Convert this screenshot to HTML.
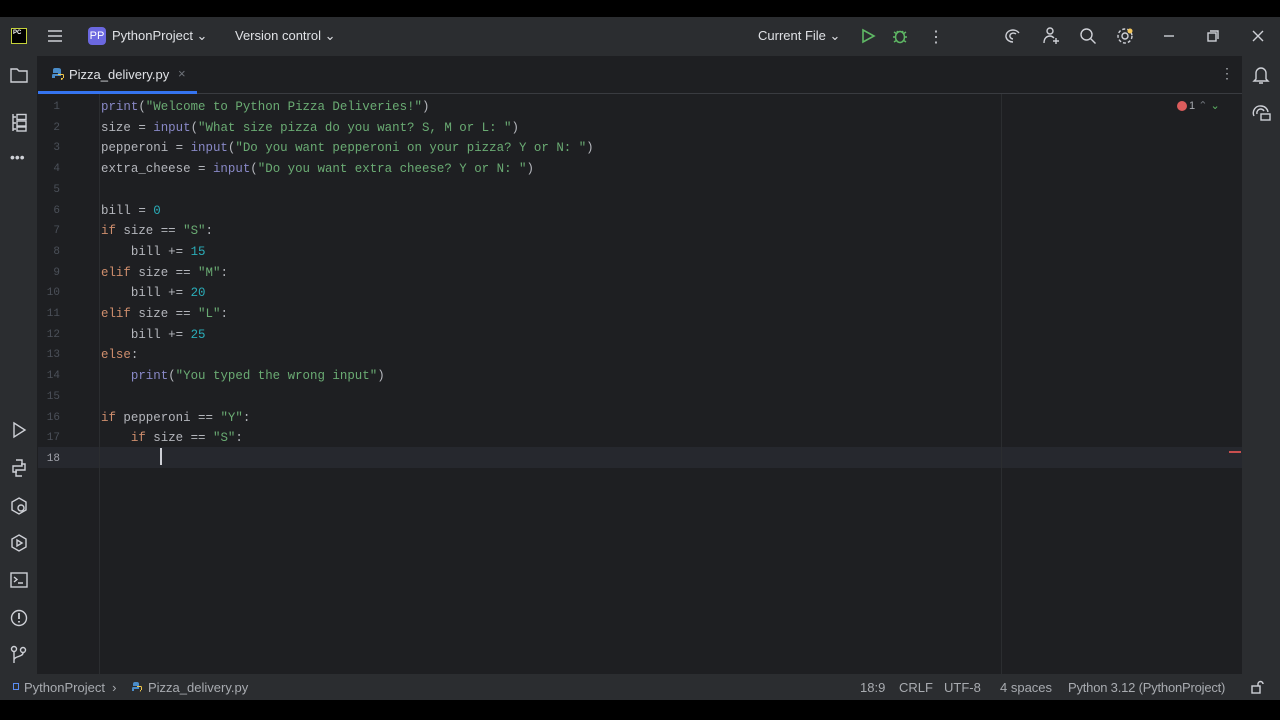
<!DOCTYPE html>
<html><head><meta charset="utf-8"><style>
*{margin:0;padding:0;box-sizing:border-box}
body{width:1280px;height:720px;background:#000;position:relative;overflow:hidden;font-family:"Liberation Sans",sans-serif;color:#dfe1e5}
.abs{position:absolute}
#title{left:0;top:17px;width:1280px;height:39px;background:#2b2d30}
#left{left:0;top:56px;width:38px;height:618px;background:#2b2d30;border-right:1px solid #1e1f22}
#right{left:1242px;top:56px;width:38px;height:618px;background:#2b2d30}
#tabs{left:38px;top:56px;width:1204px;height:38px;background:#1e1f22;border-bottom:1px solid #393b40}
#ed{left:38px;top:94px;width:1204px;height:580px;background:#1e1f22}
#status{left:0;top:674px;width:1280px;height:26px;background:#2b2d30;font-size:13px;color:#a8abb0}
.code{font-family:"Liberation Mono",monospace;font-size:12.45px;white-space:pre;color:#b4b6bc}
.ln{font-family:"Liberation Mono",monospace;font-size:11px;color:#4b5059;width:22px;text-align:right}
.k{color:#cf8e6d}.s{color:#6aab73}.b{color:#8888c6}.n{color:#2aacb8}
svg{position:absolute}
.ic{stroke:#ced0d6;fill:none;stroke-width:1.4}
</style></head><body>
<div id="title" class="abs"></div>
<div class="abs" style="left:11px;top:28px;width:16px;height:16px;background:#000;border:1.5px solid #c6d23a"></div>
<div class="abs" style="left:13px;top:30px;font-size:6px;color:#fff;font-weight:bold">PC</div>
<svg style="left:46px;top:28px" width="18" height="16"><path class="ic" d="M2 3h14M2 8h14M2 13h14"/></svg>
<div class="abs" style="left:88px;top:27px;width:18px;height:18px;border-radius:4px;background:#6b68e0;color:#fff;font-size:11px;text-align:center;line-height:18px">PP</div>
<div class="abs" style="left:112px;top:28px;font-size:13px;color:#dfe1e5">PythonProject ⌄</div>
<div class="abs" style="left:235px;top:28px;font-size:13px;color:#dfe1e5">Version control ⌄</div>
<div class="abs" style="left:758px;top:28px;font-size:13px;color:#dfe1e5">Current File ⌄</div>
<svg style="left:860px;top:28px" width="16" height="16"><path d="M3 2l11 6-11 6z" fill="none" stroke="#5fb865" stroke-width="1.6"/></svg>
<svg style="left:891px;top:27px" width="18" height="18"><ellipse cx="9" cy="10" rx="4.5" ry="5.5" fill="none" stroke="#5fb865" stroke-width="1.5"/><path d="M2 10h3M13 10h3M3 5l3 2M15 5l-3 2M3 15l3-2M15 15l-3-2M6 4l1 2M12 4l-1 2" stroke="#5fb865" stroke-width="1.4"/></svg>
<div class="abs" style="left:928px;top:27px;font-size:16px;color:#ced0d6">⋮</div>
<svg style="left:1004px;top:28px" width="18" height="16"><path class="ic" d="M9 14a7 6 0 1 1 6-9M9 11a3.5 3 0 1 1 3-5"/></svg>
<svg style="left:1042px;top:26px" width="18" height="20"><circle class="ic" cx="8" cy="5" r="3"/><path class="ic" d="M2 17c0-5 3-7 6-7 2 0 3 1 4 2M14 12v6M11 15h6"/></svg>
<svg style="left:1079px;top:27px" width="18" height="18"><circle class="ic" cx="7.5" cy="7.5" r="5.5"/><path class="ic" d="M11.5 11.5l5 5"/></svg>
<svg style="left:1116px;top:27px" width="18" height="18"><circle class="ic" cx="9" cy="9" r="3"/><circle class="ic" cx="9" cy="9" r="7" stroke-dasharray="3 2"/><circle cx="14" cy="4" r="2.5" fill="#f2c55c"/></svg>
<svg style="left:1163px;top:30px" width="12" height="12"><path class="ic" d="M1 6h10"/></svg>
<svg style="left:1207px;top:30px" width="12" height="12"><rect class="ic" x="1" y="3" width="8" height="8"/><path class="ic" d="M3 1h8v8"/></svg>
<svg style="left:1252px;top:30px" width="12" height="12"><path class="ic" d="M1 1l10 10M11 1L1 11"/></svg>

<div id="left" class="abs"></div>
<svg style="left:10px;top:67px" width="18" height="16"><path class="ic" d="M1 2h6l2 2h8v11H1z"/></svg>
<svg style="left:10px;top:113px" width="18" height="20"><path class="ic" d="M3 1v17M3 4h3M3 10h3M3 16h3"/><rect class="ic" x="7" y="1.5" width="9" height="5"/><rect class="ic" x="7" y="8" width="9" height="5"/><rect class="ic" x="7" y="14" width="9" height="4"/></svg>
<div class="abs" style="left:10px;top:149px;font-size:14px;color:#ced0d6">•••</div>
<svg style="left:10px;top:421px" width="18" height="18"><path class="ic" d="M4 2l11 7-11 7z"/></svg>
<svg style="left:9px;top:458px" width="20" height="20"><path class="ic" d="M7 2h6v6H4v6h4M13 18H7v-6h9V6h-4"/></svg>
<svg style="left:9px;top:496px" width="20" height="20"><path class="ic" d="M10 2l7 4v8l-7 4-7-4V6z"/><circle class="ic" cx="12" cy="12" r="3"/></svg>
<svg style="left:9px;top:533px" width="20" height="20"><path class="ic" d="M10 2l7 4v8l-7 4-7-4V6z"/><path class="ic" d="M8 7l5 3-5 3z"/></svg>
<svg style="left:9px;top:571px" width="20" height="18"><rect class="ic" x="2" y="2" width="16" height="14"/><path class="ic" d="M5 6l3 2.5L5 11M9 12h5"/></svg>
<svg style="left:9px;top:608px" width="20" height="20"><circle class="ic" cx="10" cy="10" r="7.5"/><path d="M10 5v6M10 13v1.5" stroke="#ced0d6" stroke-width="1.8"/></svg>
<svg style="left:9px;top:645px" width="20" height="20"><circle class="ic" cx="5" cy="4" r="2.5"/><circle class="ic" cx="14" cy="5" r="2.5"/><path class="ic" d="M5 7v11M14 8c0 4-9 3-9 7"/></svg>

<div id="right" class="abs"></div>
<svg style="left:1252px;top:65px" width="18" height="20"><path class="ic" d="M4 14V8a5 5 0 0 1 10 0v6l2 2H2z M7 18h4"/></svg>
<svg style="left:1252px;top:104px" width="20" height="18"><path class="ic" d="M2 12a7 7 0 0 1 7-10 7 7 0 0 1 7 6M5 10a4 4 0 0 1 4-5 4 4 0 0 1 3 2"/><rect class="ic" x="9" y="10" width="9" height="6"/></svg>

<div id="tabs" class="abs"></div>
<svg style="left:51px;top:67px" width="14" height="14"><path d="M7 1H4Q2 1 2 3v3h5v1H2Q1 7 1 9v2h3V9h6V3Q10 1 7 1z" fill="#4a8cc9"/><path d="M7 13h3q2 0 2-2V8H7V7h5q1 0 1 2v2h-3v2z" fill="#f2c94c"/></svg>
<div class="abs" style="left:69px;top:67px;font-size:13px;color:#dfe1e5">Pizza_delivery.py</div>
<div class="abs" style="left:178px;top:66px;font-size:13px;color:#6f737a">×</div>
<div class="abs" style="left:38px;top:91px;width:159px;height:3px;background:#3574f0"></div>
<div class="abs" style="left:1220px;top:65px;font-size:14px;color:#a8abb0">⋮</div>

<div id="ed" class="abs"></div>
<div class="abs" style="left:38px;top:447px;width:1204px;height:21px;background:#26282e"></div>
<div class="abs" style="left:99px;top:94px;width:1px;height:580px;background:#2b2d30"></div>
<div class="abs" style="left:1001px;top:94px;width:1px;height:580px;background:#2b2d30"></div>
<div class="abs" style="left:1177px;top:101px;width:10px;height:10px;border-radius:50%;background:#db5c5c"></div>
<div class="abs" style="left:1189px;top:99px;font-size:11px;color:#a8abb0">1 <span style="color:#6f737a">⌃</span> <span style="color:#5fb865">⌄</span></div>
<div class="abs" style="left:1229px;top:451px;width:12px;height:2px;background:#c94f4f"></div>

<div class="abs" style="left:38px;top:97px">
<div class="ln" style="position:absolute;left:0;top:0;line-height:20.7px">1<br>2<br>3<br>4<br>5<br>6<br>7<br>8<br>9<br>10<br>11<br>12<br>13<br>14<br>15<br>16<br>17<br><span style="color:#a1a3ab">18</span></div>
<div class="code" style="position:absolute;left:63px;top:0px;line-height:20.7px"><span class="b">print</span>(<span class="s">"Welcome to Python Pizza Deliveries!"</span>)
size = <span class="b">input</span>(<span class="s">"What size pizza do you want? S, M or L: "</span>)
pepperoni = <span class="b">input</span>(<span class="s">"Do you want pepperoni on your pizza? Y or N: "</span>)
extra_cheese = <span class="b">input</span>(<span class="s">"Do you want extra cheese? Y or N: "</span>)

bill = <span class="n">0</span>
<span class="k">if</span> size == <span class="s">"S"</span>:
    bill += <span class="n">15</span>
<span class="k">elif</span> size == <span class="s">"M"</span>:
    bill += <span class="n">20</span>
<span class="k">elif</span> size == <span class="s">"L"</span>:
    bill += <span class="n">25</span>
<span class="k">else</span>:
    <span class="b">print</span>(<span class="s">"You typed the wrong input"</span>)

<span class="k">if</span> pepperoni == <span class="s">"Y"</span>:
    <span class="k">if</span> size == <span class="s">"S"</span>:
        </div>
</div>
<div class="abs" style="left:160px;top:448px;width:2px;height:17px;background:#ced0d6"></div>

<div id="status" class="abs">
<div class="abs" style="left:13px;top:9px;width:6px;height:7px;border:1px solid #5a8cf0"></div>
<div class="abs" style="left:24px;top:6px">PythonProject &nbsp;›</div>
<svg style="left:131px;top:7px" width="12" height="12"><path d="M6 1H4Q2 1 2 3v2h4v1H2Q1 6 1 8v2h2V8h5V3Q8 1 6 1z" fill="#4a8cc9"/><path d="M6 11h2q2 0 2-2V6H6V5h4q1 0 1 2v2H9v2z" fill="#f2c94c"/></svg>
<div class="abs" style="left:148px;top:6px">Pizza_delivery.py</div>
<div class="abs" style="left:860px;top:6px">18:9</div>
<div class="abs" style="left:899px;top:6px">CRLF</div>
<div class="abs" style="left:944px;top:6px">UTF-8</div>
<div class="abs" style="left:1000px;top:6px">4 spaces</div>
<div class="abs" style="left:1068px;top:6px;letter-spacing:-0.2px">Python 3.12 (PythonProject)</div>
<svg style="left:1250px;top:6px" width="14" height="14"><rect class="ic" x="2" y="6" width="8" height="7"/><path class="ic" d="M8 6V4a2.5 2.5 0 0 1 5 0"/></svg>
</div>
</body></html>
